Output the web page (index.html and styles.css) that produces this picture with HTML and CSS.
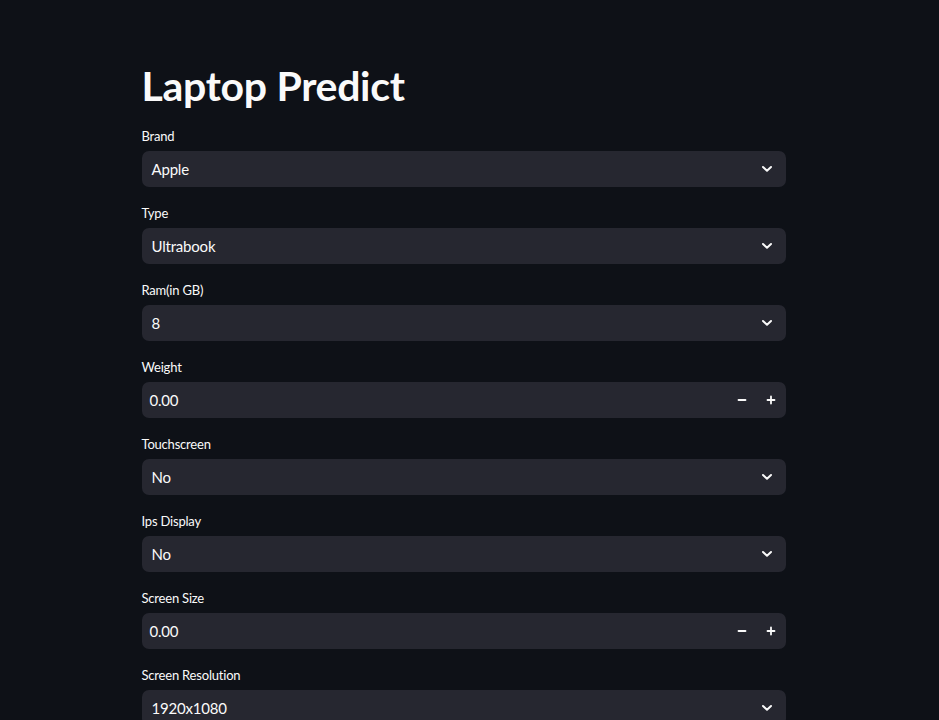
FILE: index.html
```html
<!DOCTYPE html>
<html lang="en">
<head>
<meta charset="utf-8">
<title>Laptop Predict</title>
<link rel="stylesheet" href="styles.css">
</head>
<body>
<main class="container">
  <h1 class="title">Laptop Predict</h1>

  <div class="widget">
    <div class="label">Brand</div>
    <div class="box select"><span class="value">Apple</span>
      <svg class="chev" viewBox="0 0 12 8" width="12" height="8"><path d="M2 2 L6 5.8 L10 2" fill="none" stroke="#fafafa" stroke-width="2" stroke-linecap="round" stroke-linejoin="round"/></svg>
    </div>
  </div>

  <div class="widget">
    <div class="label">Type</div>
    <div class="box select"><span class="value">Ultrabook</span>
      <svg class="chev" viewBox="0 0 12 8" width="12" height="8"><path d="M2 2 L6 5.8 L10 2" fill="none" stroke="#fafafa" stroke-width="2" stroke-linecap="round" stroke-linejoin="round"/></svg>
    </div>
  </div>

  <div class="widget">
    <div class="label">Ram(in GB)</div>
    <div class="box select"><span class="value">8</span>
      <svg class="chev" viewBox="0 0 12 8" width="12" height="8"><path d="M2 2 L6 5.8 L10 2" fill="none" stroke="#fafafa" stroke-width="2" stroke-linecap="round" stroke-linejoin="round"/></svg>
    </div>
  </div>

  <div class="widget">
    <div class="label">Weight</div>
    <div class="box number"><span class="value num">0.00</span>
      <span class="steps">
        <svg class="step" viewBox="0 0 10 10" width="10" height="10"><path d="M1.5 5 H8.5" stroke="#fafafa" stroke-width="1.8" stroke-linecap="round"/></svg>
        <svg class="step" viewBox="0 0 10 10" width="10" height="10"><path d="M1.5 5 H8.5 M5 1.5 V8.5" stroke="#fafafa" stroke-width="1.8" stroke-linecap="round"/></svg>
      </span>
    </div>
  </div>

  <div class="widget">
    <div class="label">Touchscreen</div>
    <div class="box select"><span class="value">No</span>
      <svg class="chev" viewBox="0 0 12 8" width="12" height="8"><path d="M2 2 L6 5.8 L10 2" fill="none" stroke="#fafafa" stroke-width="2" stroke-linecap="round" stroke-linejoin="round"/></svg>
    </div>
  </div>

  <div class="widget">
    <div class="label">Ips Display</div>
    <div class="box select"><span class="value">No</span>
      <svg class="chev" viewBox="0 0 12 8" width="12" height="8"><path d="M2 2 L6 5.8 L10 2" fill="none" stroke="#fafafa" stroke-width="2" stroke-linecap="round" stroke-linejoin="round"/></svg>
    </div>
  </div>

  <div class="widget">
    <div class="label">Screen Size</div>
    <div class="box number"><span class="value num">0.00</span>
      <span class="steps">
        <svg class="step" viewBox="0 0 10 10" width="10" height="10"><path d="M1.5 5 H8.5" stroke="#fafafa" stroke-width="1.8" stroke-linecap="round"/></svg>
        <svg class="step" viewBox="0 0 10 10" width="10" height="10"><path d="M1.5 5 H8.5 M5 1.5 V8.5" stroke="#fafafa" stroke-width="1.8" stroke-linecap="round"/></svg>
      </span>
    </div>
  </div>

  <div class="widget">
    <div class="label">Screen Resolution</div>
    <div class="box select"><span class="value">1920x1080</span>
      <svg class="chev" viewBox="0 0 12 8" width="12" height="8"><path d="M2 2 L6 5.8 L10 2" fill="none" stroke="#fafafa" stroke-width="2" stroke-linecap="round" stroke-linejoin="round"/></svg>
    </div>
  </div>
</main>
</body>
</html>
```

FILE: styles.css
```css
html, body {
  margin: 0;
  padding: 0;
  background: #0e1117;
  color: #fafafa;
  font-family: "Lato", "Noto Sans", sans-serif;
}

.container {
  width: 644px;
  margin: 0 auto;
  padding: 63px 0 80px;
  display: flex;
  flex-direction: column;
  gap: 16px;
  transform: translateX(-6px);
}

.title {
  margin: 0 0 1px;
  font-size: 41px;
  line-height: 46px;
  font-weight: 700;
  letter-spacing: -0.3px;
}

.widget {
  display: flex;
  flex-direction: column;
  gap: 5px;
}

.label {
  font-size: 13px;
  line-height: 20px;
  height: 20px;
  letter-spacing: -0.2px;
}

.box {
  height: 36px;
  background: #262730;
  border-radius: 7px;
  display: flex;
  align-items: center;
  justify-content: space-between;
  padding: 0 13px 0 10px;
  box-sizing: border-box;
}

.value {
  font-size: 15px;
  letter-spacing: -0.2px;
}

.num {
  margin-left: -2px;
}

.chev {
  display: block;
}

.steps {
  display: flex;
  gap: 19px;
  align-items: center;
}

.step {
  display: block;
}

.number {
  padding-right: 10px;
}
```
